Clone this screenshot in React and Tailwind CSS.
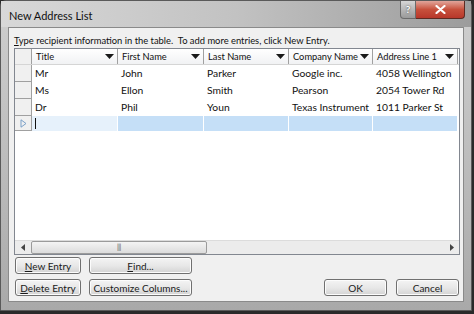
import React from 'react';

const font = { fontFamily: 'Lato, "Liberation Sans", Arial, sans-serif' };

const columns = [
  { key: 'title', label: 'Title', w: 'w-[86px]' },
  { key: 'first', label: 'First Name', w: 'w-[86px]' },
  { key: 'last', label: 'Last Name', w: 'w-[85px]' },
  { key: 'company', label: 'Company Name', w: 'w-[84px]' },
  { key: 'address', label: 'Address Line 1', w: 'w-[85px]' },
];

const rows = [
  ['Mr', 'John', 'Parker', 'Google inc.', '4058 Wellington'],
  ['Ms', 'Ellon', 'Smith', 'Pearson', '2054 Tower Rd'],
  ['Dr', 'Phil', 'Youn', 'Texas Instrument', '1011 Parker St'],
];

const DropArrow = () => (
  <svg width="9" height="5" viewBox="0 0 9 5" className="shrink-0">
    <path d="M0 0 H9 L4.5 5 Z" fill="#1a1a1a" />
  </svg>
);

const WinButton = ({ children, className = '' }) => (
  <button
    className={`h-[17px] whitespace-nowrap rounded-[3px] border border-[#707070] bg-gradient-to-b from-[#f4f4f4] via-[#e8e8e8] to-[#d4d4d4] text-[10px] leading-none text-[#1a1a1a] shadow-[inset_0_0_0_1px_#fcfcfc] ${className}`}
  >
    {children}
  </button>
);

export default function App() {
  return (
    <div
      className="w-[474px] h-[314px] overflow-hidden bg-[#2a2a2a]"
      style={font}
    >
      <div className="w-[472px] h-[311px] flex flex-col rounded-t-[6px] border border-[#5a5a5a] bg-gradient-to-b from-[#cfcfcf] via-[#bdbdbd] to-[#a9a9a9]">
        {/* title bar */}
        <div className="h-[26px] flex items-start shrink-0 bg-gradient-to-r from-[#d8d8d8] via-[#c2c2c2] to-[#9c9c9c]">
          <span className="pl-[8px] pt-[8px] text-[11px] leading-[13px] text-[#111]">New Address List</span>
          <div className="ml-auto mr-[6px] flex">
            <div className="w-[16px] h-[18px] rounded-bl-[4px] border border-t-0 border-[#6b6b6b] bg-gradient-to-b from-[#d6d6d6] to-[#9a9a9a] flex items-center justify-center text-[10px] font-bold text-white [text-shadow:0_0_2px_#333]">
              ?
            </div>
            <div className="w-[49px] h-[18px] rounded-br-[4px] border border-l-0 border-t-0 border-[#5e2a22] bg-gradient-to-b from-[#e0a59b] via-[#c7503c] to-[#b8372a] flex items-center justify-center">
              <svg width="11" height="9" viewBox="0 0 11 9">
                <path d="M1.5 1 L9.5 8 M9.5 1 L1.5 8" stroke="#ffffff" strokeWidth="2.2" strokeLinecap="round" />
              </svg>
            </div>
          </div>
        </div>

        {/* client area */}
        <div className="flex-1 mx-[7px] mb-[8px] border border-[#8a8a8a] bg-[#f0f0f0] flex flex-col px-[5px]">
          <p className="pt-[7px] h-[20px] text-[9.4px] leading-[12px] text-[#111] whitespace-nowrap">
            <span className="underline">T</span>ype recipient information in the table.&nbsp; To add more entries, click New Entry.
          </p>

          {/* grid */}
          <div className="w-[446px] h-[207px] border border-[#828790] bg-white flex flex-col">
            {/* header */}
            <div className="flex h-[16px] border-b border-[#d5d5d5] bg-gradient-to-b from-white to-[#f1f2f4]">
              <div className="w-[17px] shrink-0 border-r border-[#a0a0a0] bg-[#f0f0f0]" />
              {columns.map((c) => (
                <div
                  key={c.key}
                  className={`${c.w} shrink-0 flex items-center justify-between pl-[4px] pr-[3px] border-r border-[#a0a0a0] text-[9.3px] leading-none text-[#111] whitespace-nowrap overflow-hidden`}
                >
                  <span>{c.label}</span>
                  <DropArrow />
                </div>
              ))}
            </div>

            {/* data rows */}
            {rows.map((r, i) => (
              <div key={i} className="flex h-[17px]">
                <div className="w-[17px] shrink-0 border-r border-b border-[#a0a0a0] bg-[#f0f0f0]" />
                {r.map((cell, j) => (
                  <div
                    key={j}
                    className={`${columns[j].w} shrink-0 flex items-center pl-[3px] text-[10.3px] leading-none text-[#111] whitespace-nowrap overflow-hidden`}
                  >
                    {cell}
                  </div>
                ))}
              </div>
            ))}

            {/* new entry row */}
            <div className="flex h-[15px]">
              <div className="w-[17px] shrink-0 border-r border-b border-[#a0a0a0] bg-[#f0f0f0] flex items-center justify-center">
                <svg width="7" height="9" viewBox="0 0 7 9">
                  <path d="M1 0.8 L6 4.5 L1 8.2 Z" fill="none" stroke="#7aa0c8" strokeWidth="1" />
                </svg>
              </div>
              <div className={`${columns[0].w} shrink-0 bg-[#e6f1fb] border-r border-white flex items-center pl-[3px]`}>
                <div className="w-px h-[11px] bg-[#111]" />
              </div>
              {columns.slice(1).map((c) => (
                <div key={c.key} className={`${c.w} shrink-0 bg-[#c5dff7] border-r border-white`} />
              ))}
            </div>

            <div className="flex-1" />

            {/* horizontal scrollbar */}
            <div className="h-[14px] flex items-center bg-[#ececec] border-t border-[#dcdcdc]">
              <div className="w-[16px] flex justify-center">
                <svg width="4" height="7" viewBox="0 0 4 7">
                  <path d="M4 0 L0 3.5 L4 7 Z" fill="#444" />
                </svg>
              </div>
              <div className="w-[176px] h-[13px] rounded-[2px] border border-[#9b9b9b] bg-gradient-to-b from-[#f4f4f4] to-[#dcdcdc] flex items-center justify-center text-[7px] leading-none text-[#555] tracking-[-0.5px]">
                |||
              </div>
              <div className="flex-1" />
              <div className="w-[14px] flex justify-center">
                <svg width="4" height="7" viewBox="0 0 4 7">
                  <path d="M0 0 L4 3.5 L0 7 Z" fill="#444" />
                </svg>
              </div>
            </div>
          </div>

          {/* buttons */}
          <div className="flex flex-col gap-[5px] mt-[2px]">
            <div className="flex gap-[8px] pl-[1px]">
              <WinButton className="w-[66px]">
                <span className="underline">N</span>ew Entry
              </WinButton>
              <WinButton className="w-[103px]">
                <span className="underline">F</span>ind...
              </WinButton>
            </div>
            <div className="flex gap-[8px] pl-[1px]">
              <WinButton className="w-[66px]">
                <span className="underline">D</span>elete Entry
              </WinButton>
              <WinButton className="w-[103px]">Customize Columns...</WinButton>
              <div className="flex-1" />
              <WinButton className="w-[63px] mr-[1px]">OK</WinButton>
              <WinButton className="w-[63px] mr-[-1px]">Cancel</WinButton>
            </div>
          </div>
        </div>
      </div>
    </div>
  );
}
